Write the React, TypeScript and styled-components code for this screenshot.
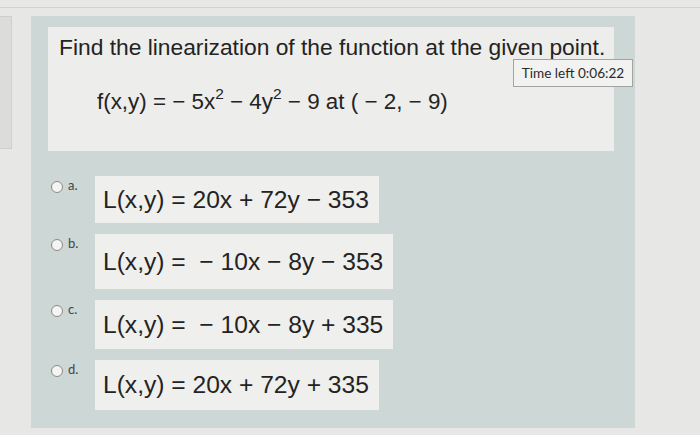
import React from "react";
import styled, { createGlobalStyle } from "styled-components";

const Global = createGlobalStyle`
  html, body { margin: 0; padding: 0; }
  body {
    background: #e7e7e5;
    font-family: "Liberation Sans", Arial, sans-serif;
    color: #232323;
    width: 700px;
    height: 435px;
    overflow: hidden;
  }
`;

const Page = styled.div`
  position: relative;
  width: 700px;
  height: 435px;
  box-sizing: border-box;
  border-top: 1px solid #d2d2d0;
  margin-top: 7px;
  padding-top: 8px;
  display: flex;
  align-items: flex-start;
`;

const Stub = styled.div`
  width: 12px;
  height: 133px;
  background: #dcdcda;
  border: 1px solid #cfcfcd;
  border-left: none;
  box-sizing: border-box;
  flex: none;
`;

const Panel = styled.div`
  margin-left: 19px;
  width: 604px;
  height: 412px;
  background: #cdd7d6;
  position: relative;
  box-sizing: border-box;
  padding: 11px 0 0 17px;
`;

const QuestionBox = styled.div`
  width: 566px;
  height: 124px;
  background: #ededeb;
  box-sizing: border-box;
  padding: 6px 0 0 11px;
`;

const Title = styled.div`
  font-size: 22.8px;
  line-height: 28px;
`;

const Formula = styled.div`
  margin: 27px 0 0 38px;
  font-size: 22.4px;
  line-height: 28px;
  sup {
    font-size: 15.5px;
    line-height: 0;
    vertical-align: 10px;
  }
`;

const Timer = styled.div`
  position: absolute;
  left: 482px;
  top: 43px;
  width: 120px;
  height: 28px;
  box-sizing: border-box;
  border: 1px solid #a3a3a3;
  background: #f2f2f0;
  font-family: Lato, "Open Sans", sans-serif;
  font-size: 13.6px;
  display: flex;
  align-items: center;
  justify-content: center;
  color: #2a2a2a;
`;

const Options = styled.div`
  margin-top: 25px;
  display: flex;
  flex-direction: column;
  gap: 11px;
`;

const Row = styled.div<{ $h: number }>`
  display: flex;
  align-items: flex-start;
  height: ${(p) => p.$h}px;
`;

const Choice = styled.div`
  width: 47px;
  flex: none;
  display: flex;
  align-items: center;
  padding-top: 4px;
  padding-left: 3px;
  box-sizing: border-box;
`;

const Radio = styled.span`
  width: 12px;
  height: 12px;
  border-radius: 50%;
  border: 1px solid #8a8a8a;
  background: #f4f4f2;
  box-sizing: border-box;
  flex: none;
`;

const Letter = styled.span`
  margin-left: 5px;
  font-family: Lato, "Open Sans", sans-serif;
  font-size: 13px;
  color: #444;
  margin-top: -3px;
`;

const Answer = styled.div`
  height: 100%;
  background: #efefed;
  box-sizing: border-box;
  padding: 0 10px 0 8px;
  display: flex;
  align-items: center;
  font-size: 24.6px;
  white-space: pre;
`;

const options = [
  { k: "a.", t: "L(x,y) = 20x + 72y − 353", h: 47 },
  { k: "b.", t: "L(x,y) =  − 10x − 8y − 353", h: 55 },
  { k: "c.", t: "L(x,y) =  − 10x − 8y + 335", h: 49 },
  { k: "d.", t: "L(x,y) = 20x + 72y + 335", h: 50 },
];

export default function App() {
  return (
    <>
      <Global />
      <Page>
        <Stub />
        <Panel>
          <QuestionBox>
            <Title>Find the linearization of the function at the given point.</Title>
            <Formula>
              f(x,y) = − 5x<sup>2</sup> − 4y<sup>2</sup> − 9 at ( − 2, − 9)
            </Formula>
          </QuestionBox>
          <Timer>Time left 0:06:22</Timer>
          <Options>
            {options.map((o) => (
              <Row key={o.k} $h={o.h}>
                <Choice>
                  <Radio />
                  <Letter>{o.k}</Letter>
                </Choice>
                <Answer>{o.t}</Answer>
              </Row>
            ))}
          </Options>
        </Panel>
      </Page>
    </>
  );
}
